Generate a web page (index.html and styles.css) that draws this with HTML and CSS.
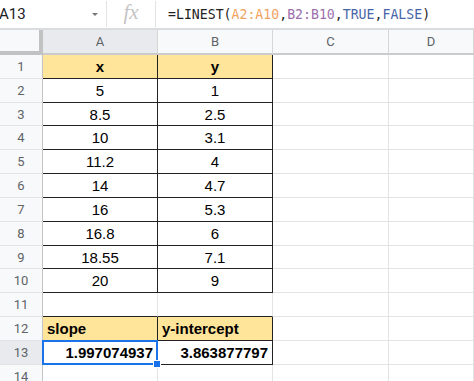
FILE: index.html
```html
<!DOCTYPE html>
<html lang="en">
<head>
    <meta charset="UTF-8">
    <title>LINEST - Sheet</title>
    <link rel="stylesheet" href="styles.css">
</head>
<body>
    <div class="formula-bar">
        <div class="name-box">
            <span class="cell-ref">A13</span>
            <span class="caret"></span>
        </div>
        <div class="fx-box"><span class="fx">fx</span></div>
        <div class="formula">=LINEST(<span class="ref1">A2:A10</span>,<span class="ref2">B2:B10</span>,<span class="bool">TRUE</span>,<span class="bool">FALSE</span>)</div>
    </div>

    <div class="sheet">
        <div class="corner"></div>
        <div class="ch active">A</div>
        <div class="ch">B</div>
        <div class="ch">C</div>
        <div class="ch">D</div>

        <div class="rh">1</div>
        <div class="c d hl center bold">x</div>
        <div class="c d hl center bold">y</div>
        <div class="c"></div><div class="c"></div>

        <div class="rh">2</div>
        <div class="c d center">5</div><div class="c d center">1</div>
        <div class="c"></div><div class="c"></div>

        <div class="rh">3</div>
        <div class="c d center">8.5</div><div class="c d center">2.5</div>
        <div class="c"></div><div class="c"></div>

        <div class="rh">4</div>
        <div class="c d center">10</div><div class="c d center">3.1</div>
        <div class="c"></div><div class="c"></div>

        <div class="rh">5</div>
        <div class="c d center">11.2</div><div class="c d center">4</div>
        <div class="c"></div><div class="c"></div>

        <div class="rh">6</div>
        <div class="c d center">14</div><div class="c d center">4.7</div>
        <div class="c"></div><div class="c"></div>

        <div class="rh">7</div>
        <div class="c d center">16</div><div class="c d center">5.3</div>
        <div class="c"></div><div class="c"></div>

        <div class="rh">8</div>
        <div class="c d center">16.8</div><div class="c d center">6</div>
        <div class="c"></div><div class="c"></div>

        <div class="rh">9</div>
        <div class="c d center">18.55</div><div class="c d center">7.1</div>
        <div class="c"></div><div class="c"></div>

        <div class="rh">10</div>
        <div class="c d center">20</div><div class="c d center">9</div>
        <div class="c"></div><div class="c"></div>

        <div class="rh">11</div>
        <div class="c bb"></div><div class="c bb"></div>
        <div class="c"></div><div class="c"></div>

        <div class="rh">12</div>
        <div class="c d hl bold">slope</div><div class="c d hl bold">y-intercept</div>
        <div class="c"></div><div class="c"></div>

        <div class="rh active">13</div>
        <div class="c d right bold selected">1.997074937</div><div class="c d right bold">3.863877797</div>
        <div class="c"></div><div class="c"></div>

        <div class="rh">14</div>
        <div class="c"></div><div class="c"></div>
        <div class="c"></div><div class="c"></div>
    </div>
</body>
</html>
```

FILE: styles.css
```css
body, html {
    margin: 0;
    padding: 0;
    background: #ffffff;
    overflow: hidden;
}
.formula-bar {
    display: flex;
    align-items: center;
    height: 28px;
    border-bottom: 2px solid #dadce0;
    font-family: Roboto, "Liberation Sans", sans-serif;
}
.name-box {
    width: 107px;
    height: 26px;
    display: flex;
    align-items: center;
    justify-content: space-between;
    border-right: 1px solid #e3e3e3;
    box-sizing: border-box;
}
.cell-ref {
    font-size: 15px;
    color: #202124;
    margin-left: -1px;
}
.caret {
    width: 0;
    height: 0;
    border-left: 3px solid transparent;
    border-right: 3px solid transparent;
    border-top: 3px solid #777;
    margin-right: 8px;
}
.fx-box {
    width: 48px;
    height: 26px;
    display: flex;
    align-items: center;
    justify-content: center;
    border-right: 1px solid #e3e3e3;
}
.fx {
    font-family: "Liberation Serif", serif;
    font-style: italic;
    font-size: 21px;
    color: #c4c4c4;
    margin-top: -3px;
}
.formula {
    padding-left: 12px;
    font-family: "DejaVu Sans Mono", monospace;
    font-size: 13.2px;
    color: #222;
    white-space: nowrap;
}
.ref1 {
    color: #f0a35e;
}
.ref2 {
    color: #9c6fad;
}
.bool {
    color: #4865a8;
}
.sheet {
    display: grid;
    grid-template-columns: 43px 115px 115px 116px 1fr;
    grid-template-rows: 25px repeat(14, 23.83px);
    font-family: "Liberation Sans", Arial, sans-serif;
    font-size: 15px;
    color: #000;
}
.sheet > div {
    box-sizing: border-box;
    display: flex;
    align-items: center;
    min-width: 0;
    white-space: nowrap;
}
.corner {
    background: #f8f9fa;
    border-right: 4px solid #c2c2c2;
    border-bottom: 4px solid #c2c2c2;
}
.ch {
    justify-content: center;
    background: #f8f9fa;
    border-right: 1px solid #d6d6d6;
    border-bottom: 2px solid #cbcbcb;
    font-family: Roboto, sans-serif;
    font-size: 13px;
    color: #5f6368;
}
.ch.active, .rh.active {
    background: #e8eaed;
}
.rh {
    justify-content: center;
    background: #f8f9fa;
    border-right: 1px solid #c4c4c4;
    border-bottom: 1px solid #e3e3e3;
    font-family: Roboto, sans-serif;
    font-size: 13px;
    color: #5f6368;
}
.c {
    border-right: 1px solid #e2e3e3;
    border-bottom: 1px solid #e2e3e3;
    padding: 0 4px;
}
.c.d {
    border-right-color: #222;
    border-bottom-color: #222;
}
.c.bb {
    border-bottom-color: #222;
}
.hl {
    background: #ffe599;
}
.center {
    justify-content: center;
}
.right {
    justify-content: flex-end;
}
.bold {
    font-weight: bold;
}
.selected {
    position: relative;
}
.selected::after {
    content: "";
    position: absolute;
    top: -1px;
    left: -1px;
    right: -1px;
    bottom: -1px;
    border: 2px solid #1a73e8;
}
.selected::before {
    content: "";
    position: absolute;
    right: -4px;
    bottom: -4px;
    width: 6px;
    height: 6px;
    background: #1a73e8;
    border: 1px solid #ffffff;
    z-index: 1;
}
```
